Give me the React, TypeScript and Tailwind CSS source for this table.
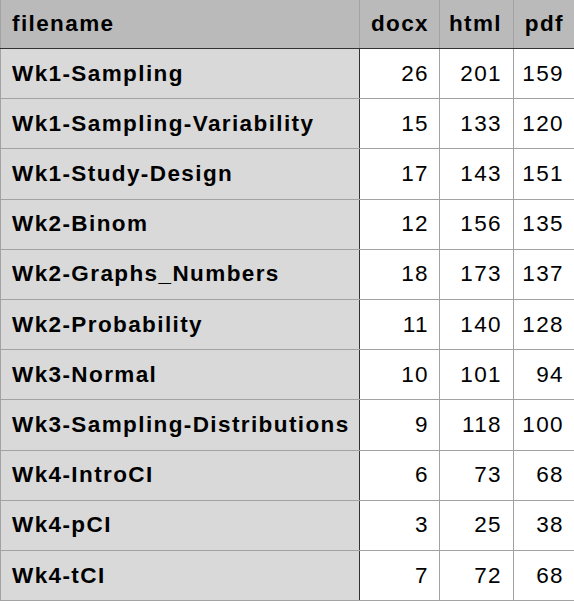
import React from 'react';

const rows = [
  { name: 'Wk1-Sampling', docx: 26, html: 201, pdf: 159 },
  { name: 'Wk1-Sampling-Variability', docx: 15, html: 133, pdf: 120 },
  { name: 'Wk1-Study-Design', docx: 17, html: 143, pdf: 151 },
  { name: 'Wk2-Binom', docx: 12, html: 156, pdf: 135 },
  { name: 'Wk2-Graphs_Numbers', docx: 18, html: 173, pdf: 137 },
  { name: 'Wk2-Probability', docx: 11, html: 140, pdf: 128 },
  { name: 'Wk3-Normal', docx: 10, html: 101, pdf: 94 },
  { name: 'Wk3-Sampling-Distributions', docx: 9, html: 118, pdf: 100 },
  { name: 'Wk4-IntroCI', docx: 6, html: 73, pdf: 68 },
  { name: 'Wk4-pCI', docx: 3, html: 25, pdf: 38 },
  { name: 'Wk4-tCI', docx: 7, html: 72, pdf: 68 },
];

const cols = 'grid grid-cols-[360px_80px_74px_60px]';

export default function App() {
  return (
    <div className="w-[574px] bg-white text-[22.5px] tracking-[1.4px] text-black font-['Liberation_Sans',Arial,sans-serif]">
      {/* header */}
      <div className={`${cols} h-[49px] bg-[#bababa] border-b border-[#333333] font-bold`}>
        <div className="flex items-center pl-[11px] border-l border-r border-[#a2a2a2]">filename</div>
        <div className="flex items-center justify-end pr-[10px] border-r border-[#a2a2a2]">docx</div>
        <div className="flex items-center justify-end pr-[11px] border-r border-[#a2a2a2]">html</div>
        <div className="flex items-center justify-end pr-[10px]">pdf</div>
      </div>

      {rows.map((r) => (
        <div key={r.name} className={`${cols} h-[50.2px] border-b border-[#a2a2a2]`}>
          <div className="flex items-center pl-[11px] bg-[#d9d9d9] font-bold border-l border-l-[#a2a2a2] border-r border-r-[#333333]">
            {r.name}
          </div>
          <div className="flex items-center justify-end pr-[10px] border-r border-[#a2a2a2]">{r.docx}</div>
          <div className="flex items-center justify-end pr-[11px] border-r border-[#a2a2a2]">{r.html}</div>
          <div className="flex items-center justify-end pr-[10px]">{r.pdf}</div>
        </div>
      ))}
    </div>
  );
}
